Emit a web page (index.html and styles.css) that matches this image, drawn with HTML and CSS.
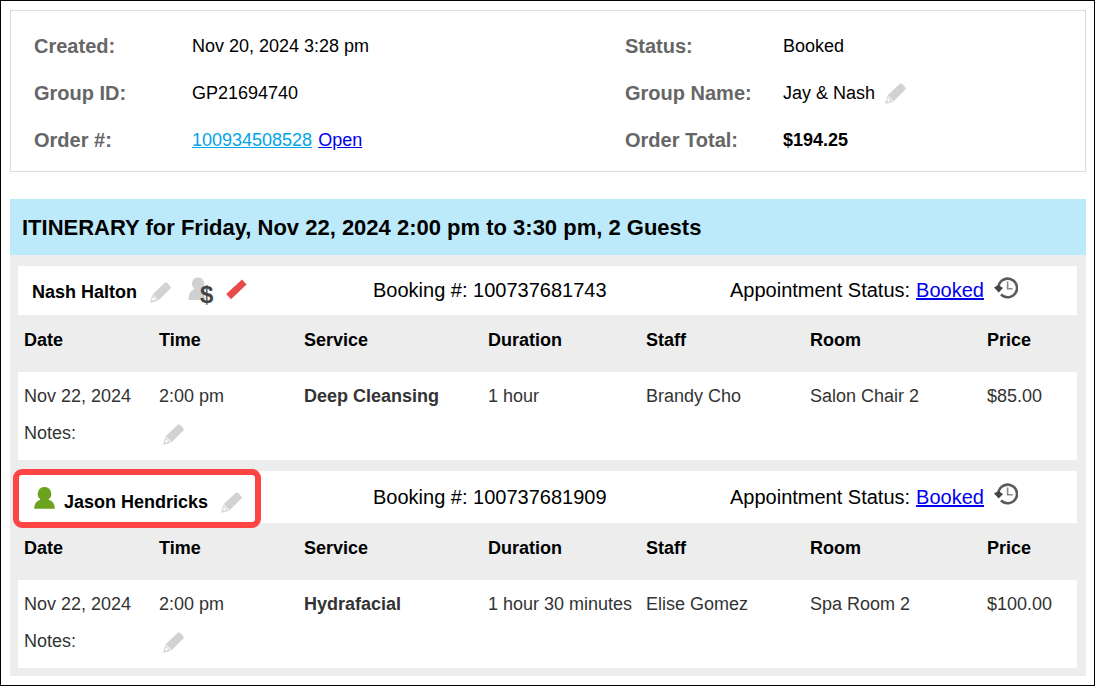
FILE: index.html
```html
<!DOCTYPE html>
<html lang="en">
<head>
    <meta charset="UTF-8">
    <meta name="viewport" content="width=device-width, initial-scale=1.0">
    <title>Group Booking GP21694740</title>
    <link rel="stylesheet" href="styles.css">
</head>
<body>
    <!-- Shared icons -->
    <svg class="sprite" aria-hidden="true">
        <symbol id="pencil" viewBox="0 0 21 21">
            <path d="M14.8 .8Q16 0 17.2 .8L20.4 4.4Q21.2 5.6 20.2 6.8L8.6 18.2L2.6 12.2Z" fill="#d2d2d2"/>
            <path d="M2.2 12.8L8 18.8L1 20.8Q0 21 .2 20Z" fill="#d8d8d8"/>
            <path d="M2.8 15L5.4 17.4L3.4 18.8L2 17.4Z" fill="#fff"/>
        </symbol>
        <symbol id="history" viewBox="0 0 24 22">
            <path d="M4.4 11A9.3 9.3 0 1 1 7 17.4" fill="none" stroke="#5a5a5a" stroke-width="2.6"/>
            <path d="M0 10.4L4.4 8L9 11L4.8 15.4Z" fill="#444"/>
            <path d="M13.6 4.4V11.8H18.6" fill="none" stroke="#888" stroke-width="1.6"/>
        </symbol>
    </svg>

    <!-- Booking summary -->
    <section class="summary">
        <dl>
            <dt>Created:</dt>
            <dd>Nov 20, 2024 3:28 pm</dd>
            <dt>Group ID:</dt>
            <dd>GP21694740</dd>
            <dt>Order #:</dt>
            <dd><a class="order-link" href="#order">100934508528</a> <a href="#open">Open</a></dd>
        </dl>
        <dl>
            <dt>Status:</dt>
            <dd>Booked</dd>
            <dt>Group Name:</dt>
            <dd>Jay &amp; Nash <button class="icon-btn" aria-label="Edit group name"><svg width="21" height="21"><use href="#pencil"/></svg></button></dd>
            <dt>Order Total:</dt>
            <dd><strong>$194.25</strong></dd>
        </dl>
    </section>

    <!-- Itinerary -->
    <section class="itinerary">
        <h1>ITINERARY for Friday, Nov 22, 2024 2:00 pm to 3:30 pm, 2 Guests</h1>

        <article class="guest">
            <header class="guest-bar">
                <div class="guest-name">
                    <strong>Nash Halton</strong>
                    <button class="icon-btn" aria-label="Edit guest"><svg width="21" height="21"><use href="#pencil"/></svg></button>
                    <button class="icon-btn payer" aria-label="Paying guest">
                        <svg width="27" height="30" viewBox="0 0 27 30">
                            <path d="M10 0.4A6.2 6.2 0 0 1 14.2 11.2Q14.4 12.6 16.4 13.4L17 23H0.4Q0.4 14.4 5.6 12.4L6 11.2A6.2 6.2 0 0 1 10 .4Z" fill="#d0d0d0"/>
                            <text class="dollar" x="12" y="26">$</text>
                        </svg>
                    </button>
                    <button class="icon-btn mark" aria-label="Remove guest"><svg width="21" height="21" viewBox="0 0 21 21"><path d="M16 .4L20.6 5.4L5 20.2L.2 15Z" fill="#e64c4c"/></svg></button>
                </div>
                <div>Booking #: 100737681743</div>
                <div class="status">Appointment Status: <a href="#status-1">Booked</a>
                    <button class="icon-btn" aria-label="Appointment history"><svg width="24" height="22"><use href="#history"/></svg></button>
                </div>
            </header>
            <table>
                <colgroup>
                    <col class="c-date"><col class="c-time"><col class="c-service"><col class="c-duration"><col class="c-staff"><col class="c-room"><col class="c-price">
                </colgroup>
                <thead>
                    <tr><th>Date</th><th>Time</th><th>Service</th><th>Duration</th><th>Staff</th><th>Room</th><th>Price</th></tr>
                </thead>
                <tbody>
                    <tr>
                        <td>Nov 22, 2024</td>
                        <td>2:00 pm</td>
                        <td><strong>Deep Cleansing</strong></td>
                        <td>1 hour</td>
                        <td>Brandy Cho</td>
                        <td>Salon Chair 2</td>
                        <td>$85.00</td>
                    </tr>
                    <tr class="notes">
                        <td>Notes:</td>
                        <td colspan="6"><button class="icon-btn" aria-label="Edit notes"><svg width="21" height="21"><use href="#pencil"/></svg></button></td>
                    </tr>
                </tbody>
            </table>
        </article>

        <article class="guest">
            <header class="guest-bar guest-bar-arrived">
                <div class="guest-name highlighted">
                    <svg class="person" width="21" height="22" viewBox="0 0 21 22" role="img" aria-label="Guest">
                        <path d="M10.5 0A6.8 6.8 0 0 1 14.6 12.2Q14.7 13 16.4 13.6Q20.6 15.4 20.8 21.8H.2Q.4 15.4 4.6 13.6Q6.3 13 6.4 12.2A6.8 6.8 0 0 1 10.5 0Z" fill="#6ba31f"/>
                    </svg>
                    <strong>Jason Hendricks</strong>
                    <button class="icon-btn" aria-label="Edit guest"><svg width="21" height="21"><use href="#pencil"/></svg></button>
                </div>
                <div>Booking #: 100737681909</div>
                <div class="status">Appointment Status: <a href="#status-2">Booked</a>
                    <button class="icon-btn" aria-label="Appointment history"><svg width="24" height="22"><use href="#history"/></svg></button>
                </div>
            </header>
            <table>
                <colgroup>
                    <col class="c-date"><col class="c-time"><col class="c-service"><col class="c-duration"><col class="c-staff"><col class="c-room"><col class="c-price">
                </colgroup>
                <thead>
                    <tr><th>Date</th><th>Time</th><th>Service</th><th>Duration</th><th>Staff</th><th>Room</th><th>Price</th></tr>
                </thead>
                <tbody>
                    <tr>
                        <td>Nov 22, 2024</td>
                        <td>2:00 pm</td>
                        <td><strong>Hydrafacial</strong></td>
                        <td>1 hour 30 minutes</td>
                        <td>Elise Gomez</td>
                        <td>Spa Room 2</td>
                        <td>$100.00</td>
                    </tr>
                    <tr class="notes">
                        <td>Notes:</td>
                        <td colspan="6"><button class="icon-btn" aria-label="Edit notes"><svg width="21" height="21"><use href="#pencil"/></svg></button></td>
                    </tr>
                </tbody>
            </table>
        </article>
    </section>
</body>
</html>
```
FILE: styles.css
```css
* { box-sizing: border-box; }
body {
    font-family: Arial, "Liberation Sans", sans-serif;
    font-size: 18px;
    color: #000;
    background-color: #fff;
    margin: 0;
    padding: 9px 8px 9px 9px;
    border: 1px solid #000;
    min-height: 100vh;
}
a { color: #0000ee; }
.sprite { position: absolute; width: 0; height: 0; }
.icon-btn {
    display: inline-flex;
    padding: 0;
    border: none;
    background: none;
    cursor: pointer;
}

/* Summary */
.summary {
    display: grid;
    grid-template-columns: 591fr 460fr;
    padding: 12px 0 7px 23px;
    border: 1px solid #dcdcdc;
    margin-bottom: 27px;
}
.summary dl {
    display: grid;
    grid-template-columns: 158px 1fr;
    grid-auto-rows: 47px;
    align-items: center;
    margin: 0;
}
.summary dt { font-size: 20px; font-weight: bold; color: #666; }
.summary dd { display: flex; align-items: center; gap: 6px; margin: 0; }
.summary .icon-btn { margin-left: 4px; }
.order-link { color: #00a4e8; }

/* Itinerary */
.itinerary { background-color: #ededed; padding-bottom: 8px; }
h1 {
    font-size: 22px;
    line-height: 56px;
    margin: 0;
    padding-left: 12px;
    padding-top: 1px;
    height: 56px;
    background-color: #bdeafa;
}
.guest { padding: 11px 9px 0 8px; }
.guest-bar {
    display: grid;
    grid-template-columns: 355fr 357fr 347fr;
    align-items: center;
    min-height: 49px;
    font-size: 20px;
    background-color: #fff;
}
.guest-bar-arrived { min-height: 52px; }
.guest-name {
    display: flex;
    align-items: center;
    align-self: stretch;
    justify-self: start;
    gap: 13px;
    padding: 3px 13px 0 14px;
    font-size: 18px;
}
.payer { margin-left: 4px; }
.mark { padding-bottom: 6px; margin-left: -2px; }
.dollar {
    font-size: 24px;
    font-weight: bold;
    fill: #444;
}
.status { display: flex; align-items: center; gap: 6px; }
.status .icon-btn { margin-left: 4px; padding-bottom: 6px; }

/* Outline drawn over the edges of the guest bar */
.highlighted {
    position: relative;
    padding: 10px 14px 0 16px;
}
.highlighted::after {
    content: "";
    position: absolute;
    inset: -2px -5px -5px;
    border: 6px solid #ff4444;
    border-radius: 9px;
    pointer-events: none;
}
.person { margin: 0 -4px 8px 0; }

table {
    width: 100%;
    table-layout: fixed;
    border-collapse: collapse;
    color: #333;
}
th, td { padding: 0 0 0 6px; text-align: left; white-space: nowrap; }
th { height: 57px; padding-bottom: 7px; color: #000; }
tbody { background-color: #fff; }
td { height: 49px; }
.notes td { height: 39px; line-height: 24px; vertical-align: top; }
.notes .icon-btn { margin: 3px 0 0 4px; }
.c-date { width: 135px; }
.c-time { width: 145px; }
.c-service { width: 184px; }
.c-duration { width: 158px; }
.c-staff { width: 164px; }
.c-room { width: 177px; }
.c-price { width: 96px; }
```
